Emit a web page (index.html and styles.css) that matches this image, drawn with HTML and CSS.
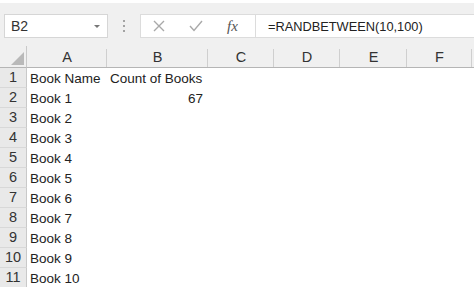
FILE: index.html
```html
<!DOCTYPE html>
<html lang="en">
<head>
  <meta charset="UTF-8">
  <title>RANDBETWEEN</title>
  <link rel="stylesheet" href="styles.css">
</head>
<body>
  <div class="toolbar">
    <div class="namebox">
      <span>B2</span>
      <span class="caret"></span>
    </div>
    <div class="grip"><i></i><i></i><i></i></div>
    <div class="formula">
      <div class="icons">
        <svg class="ico" width="14" height="14" viewBox="0 0 14 14"><path d="M2 2 L12 12 M12 2 L2 12" stroke="#a9a9a9" stroke-width="1.4" fill="none"/></svg>
        <svg class="ico ok" width="16" height="14" viewBox="0 0 16 14"><path d="M2 7 L6 11.5 L14 2" stroke="#a9a9a9" stroke-width="1.4" fill="none"/></svg>
        <span class="fx">fx</span>
      </div>
      <div class="input">=RANDBETWEEN(10,100)</div>
    </div>
  </div>

  <div class="sheet">
    <div class="corner"><span class="tri"></span></div>
    <div class="colhead">A</div>
    <div class="colhead">B</div>
    <div class="colhead">C</div>
    <div class="colhead">D</div>
    <div class="colhead">E</div>
    <div class="colhead">F</div>
    <div class="colhead last"></div>

    <div class="rowhead">1</div><div class="cell">Book Name</div><div class="cell">Count of Books</div><div class="cell"></div><div class="cell"></div><div class="cell"></div><div class="cell"></div><div class="cell"></div>
    <div class="rowhead">2</div><div class="cell">Book 1</div><div class="cell num">67</div><div class="cell"></div><div class="cell"></div><div class="cell"></div><div class="cell"></div><div class="cell"></div>
    <div class="rowhead">3</div><div class="cell">Book 2</div><div class="cell"></div><div class="cell"></div><div class="cell"></div><div class="cell"></div><div class="cell"></div><div class="cell"></div>
    <div class="rowhead">4</div><div class="cell">Book 3</div><div class="cell"></div><div class="cell"></div><div class="cell"></div><div class="cell"></div><div class="cell"></div><div class="cell"></div>
    <div class="rowhead">5</div><div class="cell">Book 4</div><div class="cell"></div><div class="cell"></div><div class="cell"></div><div class="cell"></div><div class="cell"></div><div class="cell"></div>
    <div class="rowhead">6</div><div class="cell">Book 5</div><div class="cell"></div><div class="cell"></div><div class="cell"></div><div class="cell"></div><div class="cell"></div><div class="cell"></div>
    <div class="rowhead">7</div><div class="cell">Book 6</div><div class="cell"></div><div class="cell"></div><div class="cell"></div><div class="cell"></div><div class="cell"></div><div class="cell"></div>
    <div class="rowhead">8</div><div class="cell">Book 7</div><div class="cell"></div><div class="cell"></div><div class="cell"></div><div class="cell"></div><div class="cell"></div><div class="cell"></div>
    <div class="rowhead">9</div><div class="cell">Book 8</div><div class="cell"></div><div class="cell"></div><div class="cell"></div><div class="cell"></div><div class="cell"></div><div class="cell"></div>
    <div class="rowhead">10</div><div class="cell">Book 9</div><div class="cell"></div><div class="cell"></div><div class="cell"></div><div class="cell"></div><div class="cell"></div><div class="cell"></div>
    <div class="rowhead">11</div><div class="cell">Book 10</div><div class="cell"></div><div class="cell"></div><div class="cell"></div><div class="cell"></div><div class="cell"></div><div class="cell"></div>
  </div>
</body>
</html>
```

FILE: styles.css
```css
body { margin: 0; background: #fff; font-family: "Liberation Sans", Arial, sans-serif; font-size: 13.5px; color: #222; overflow: hidden; }

.toolbar { margin-top: 3px; height: 43px; background: #f0f0f0; display: flex; align-items: flex-start; padding-top: 11px; box-sizing: border-box; }
.namebox { margin-left: 4px; width: 104px; height: 24px; box-sizing: border-box; background: #fff; border: 1px solid #d6d6d6; display: flex; align-items: center; justify-content: space-between; padding: 0 6px 0 6px; color: #333; font-size: 14px; }
.caret { width: 0; height: 0; border-left: 3px solid transparent; border-right: 3px solid transparent; border-top: 3px solid #777; margin-right: 1px; }
.grip { width: 32px; height: 24px; display: flex; flex-direction: column; align-items: center; justify-content: center; gap: 3px; }
.grip i { display: block; width: 2px; height: 2px; background: #a3a3a3; }
.formula { flex: 1; height: 24px; background: #fff; border: 1px solid #dcdcdc; border-right: none; box-sizing: border-box; display: flex; }
.icons { width: 114px; display: flex; align-items: center; border-right: 1px solid #dcdcdc; }
.ico { margin-left: 11px; }
.ico.ok { margin-left: 22px; }
.fx { margin-left: 23px; font-family: "Liberation Serif", serif; font-style: italic; font-size: 15px; color: #555; }
.input { padding-left: 12px; display: flex; align-items: center; color: #222; font-size: 12.8px; }

.sheet { display: grid; grid-template-columns: 27px 80px 101px 66px 66px 67px 65px 3px; grid-template-rows: 22px repeat(11, 20px); }
.corner { background: #f0f0f0; border-right: 1px solid #c9c9c9; border-bottom: 1px solid #b5b5b5; box-sizing: border-box; position: relative; }
.tri { position: absolute; right: 2px; bottom: 2px; width: 0; height: 0; border-left: 13px solid transparent; border-bottom: 13px solid #b9b9b9; }
.colhead { background: #f0f0f0; border-bottom: 1px solid #b5b5b5; box-sizing: border-box; text-align: center; line-height: 23px; color: #333; font-size: 14.5px; position: relative; }
.colhead::after { content: ""; position: absolute; right: 0; top: 3px; bottom: 0; width: 1px; background: #cfcfcf; }
.colhead.last::after { display: none; }
.rowhead { background: #e9e9e9; border-right: 1px solid #c9c9c9; border-bottom: 1px solid #d8d8d8; box-sizing: border-box; text-align: center; line-height: 19px; color: #333; font-size: 14.5px; }
.cell { padding: 0 3px; line-height: 21px; white-space: nowrap; }
.cell.num { text-align: right; padding-right: 5px; }
```
